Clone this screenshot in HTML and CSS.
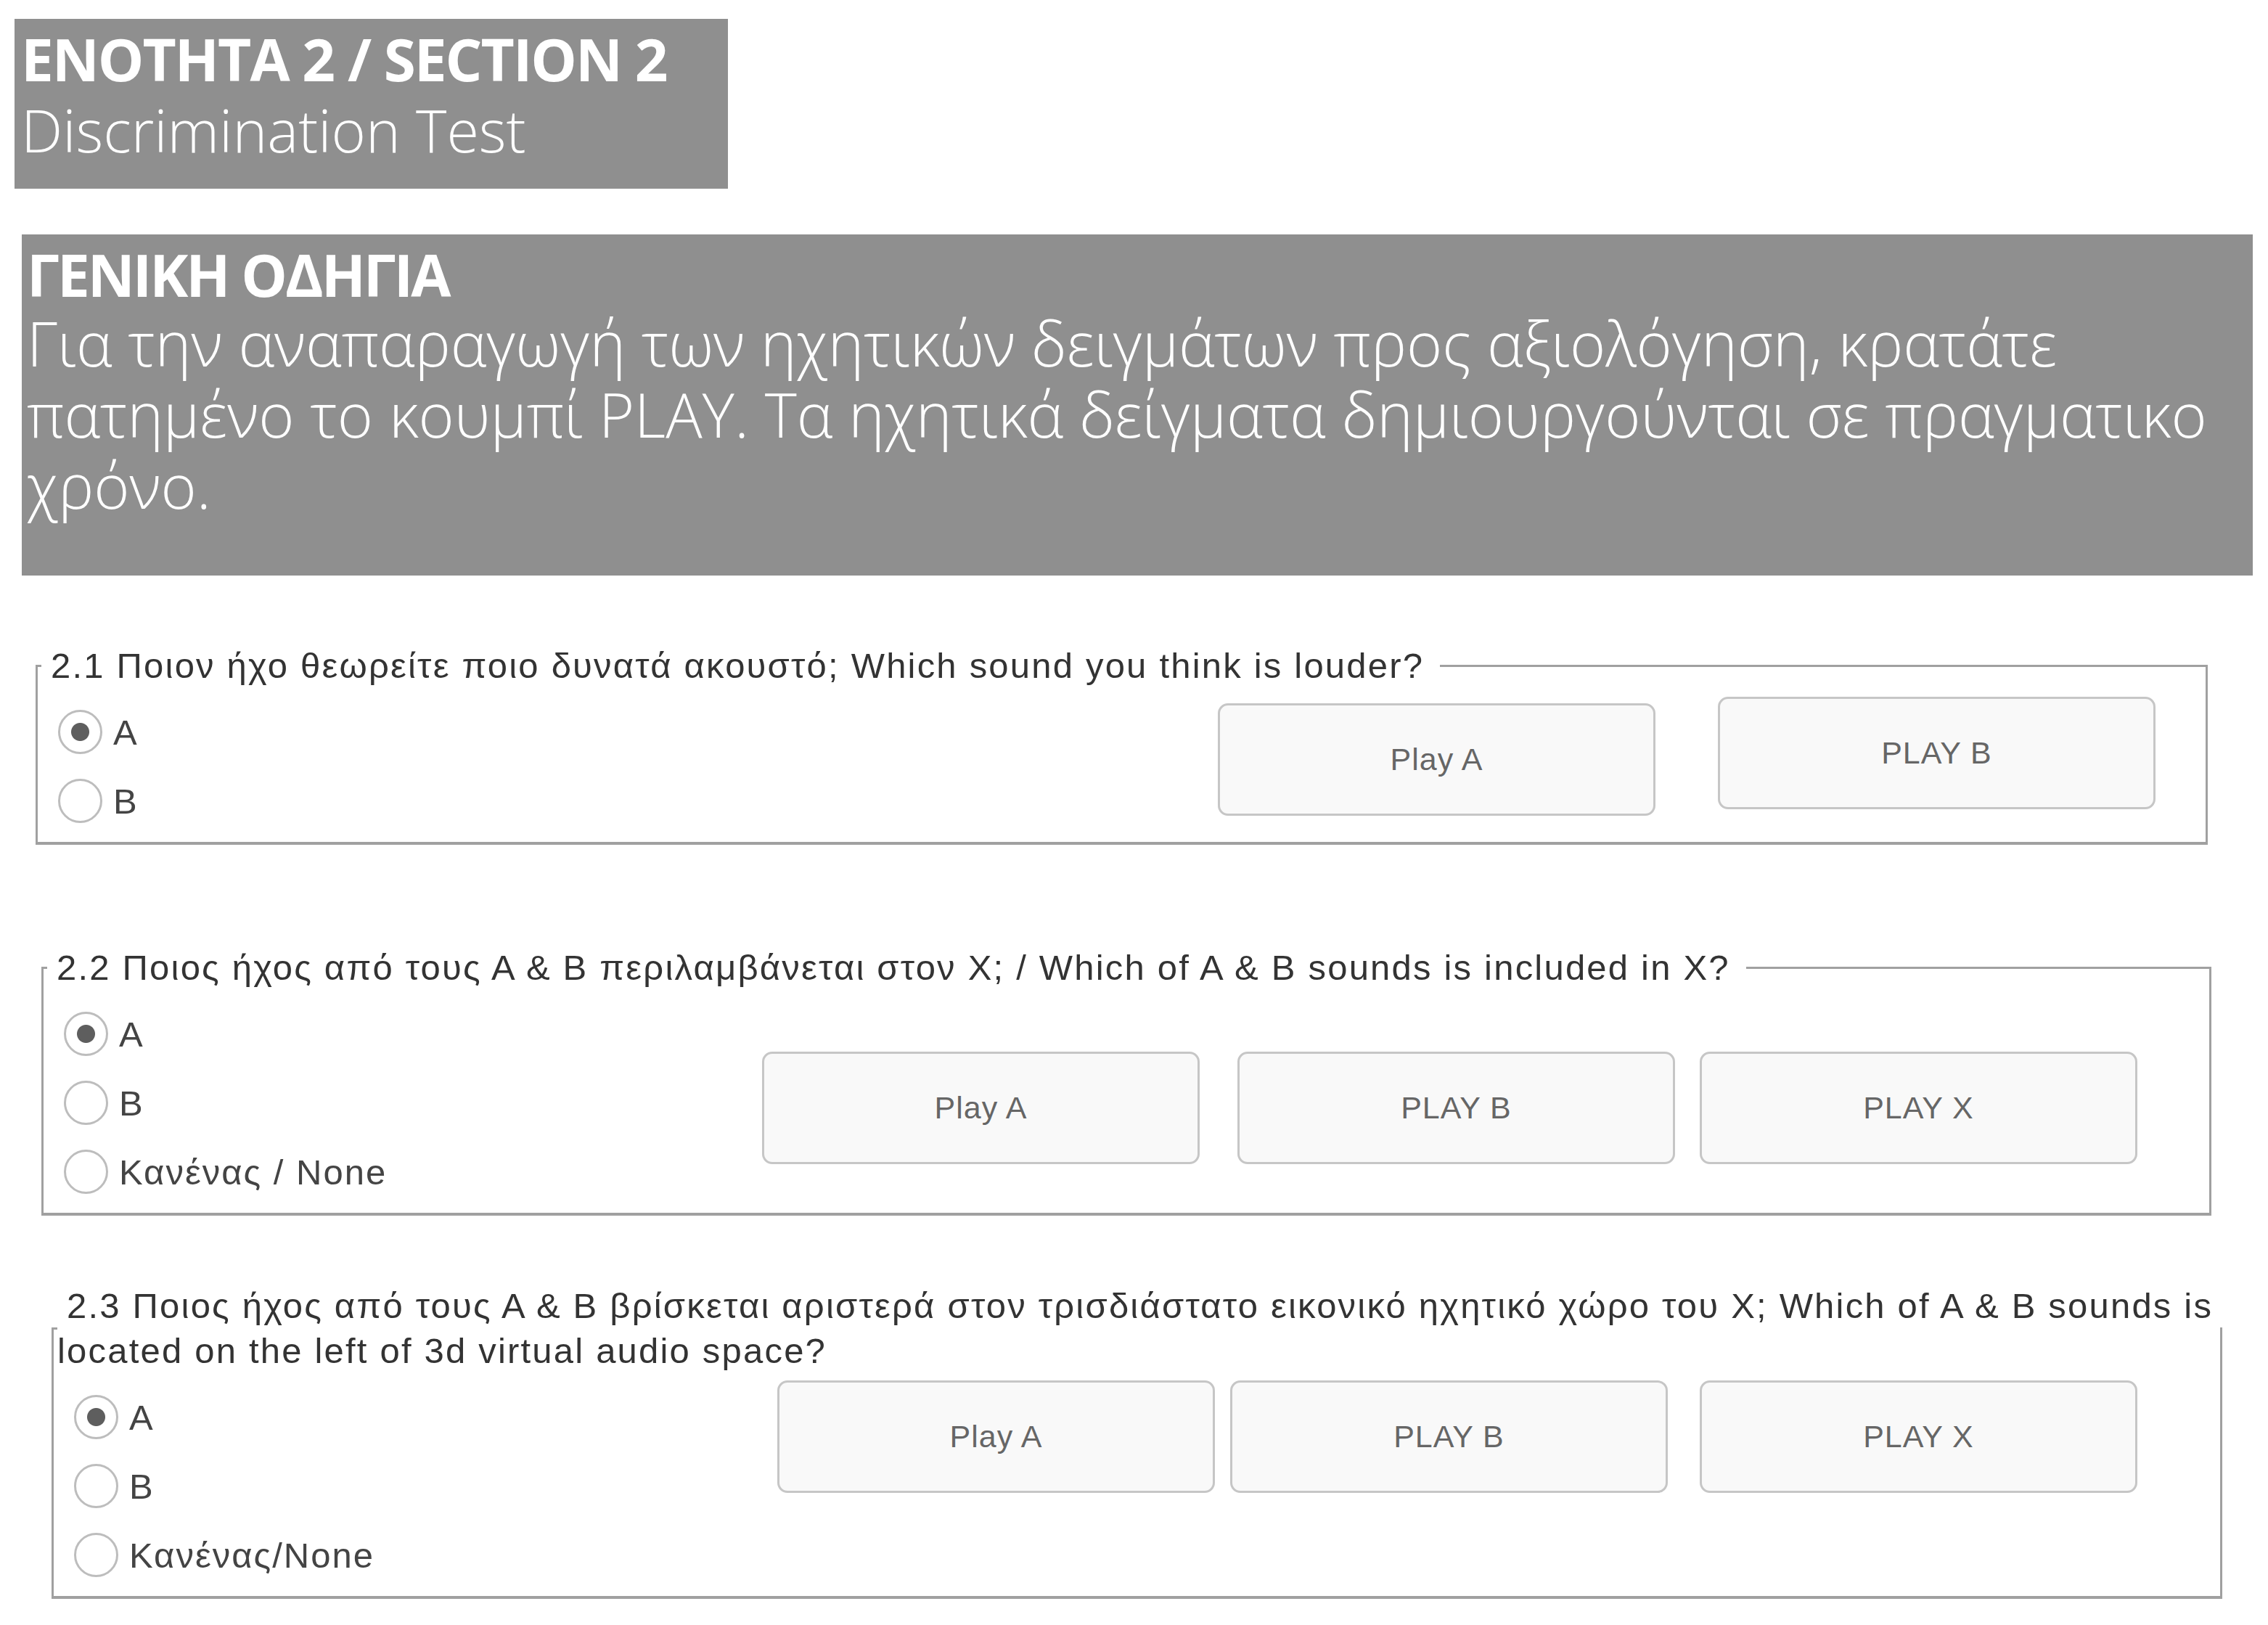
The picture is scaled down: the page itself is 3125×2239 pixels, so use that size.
FILE: index.html
```html
<!DOCTYPE html>
<html lang="el">
<head>
    <meta charset="UTF-8">
    <meta name="viewport" content="width=device-width, initial-scale=1.0">
    <title>Ενότητα 2 - Discrimination Test</title>
    <link rel="stylesheet" href="styles.css">
</head>
<body>

    <!-- Section header -->
    <div class="section-head">
        <h1 class="section-title">ΕΝΟΤΗΤΑ 2 / SECTION 2</h1>
        <p class="section-sub">Discrimination Test</p>
    </div>

    <!-- General instruction -->
    <div class="notice">
        <h2 class="notice-title">ΓΕΝΙΚΗ ΟΔΗΓΙΑ</h2>
        <p class="notice-text">Για την αναπαραγωγή των ηχητικών δειγμάτων προς αξιολόγηση, κρατάτε<br>πατημένο το κουμπί PLAY. Τα ηχητικά δείγματα δημιουργούνται σε πραγματικο<br>χρόνο.</p>
    </div>

    <!-- 2.1 -->
    <fieldset class="question q1">
        <legend>2.1 Ποιον ήχο θεωρείτε ποιο δυνατά ακουστό; Which sound you think is louder?</legend>
        <div class="question-body">
            <div class="choices">
                <label class="choice"><input type="radio" name="q21" value="A" checked><span>A</span></label>
                <label class="choice"><input type="radio" name="q21" value="B"><span>B</span></label>
            </div>
            <div class="players">
                <button class="play-btn play-low">Play A</button>
                <button class="play-btn">PLAY B</button>
            </div>
        </div>
    </fieldset>

    <!-- 2.2 -->
    <fieldset class="question q2">
        <legend>2.2 Ποιος ήχος από τους Α &amp; Β περιλαμβάνεται στον Χ; / Which of A &amp; B sounds is included in X?</legend>
        <div class="question-body">
            <div class="choices">
                <label class="choice"><input type="radio" name="q22" value="A" checked><span>A</span></label>
                <label class="choice"><input type="radio" name="q22" value="B"><span>B</span></label>
                <label class="choice"><input type="radio" name="q22" value="none"><span>Κανένας / None</span></label>
            </div>
            <div class="players">
                <button class="play-btn">Play A</button>
                <button class="play-btn">PLAY B</button>
                <button class="play-btn">PLAY X</button>
            </div>
        </div>
    </fieldset>

    <!-- 2.3 -->
    <fieldset class="question q3">
        <legend>2.3 Ποιος ήχος από τους Α &amp; Β βρίσκεται αριστερά στον τρισδιάστατο εικονικό ηχητικό χώρο του Χ; Which of A &amp; B sounds is<br>located on the left of 3d virtual audio space?</legend>
        <div class="question-body">
            <div class="choices">
                <label class="choice"><input type="radio" name="q23" value="A" checked><span>A</span></label>
                <label class="choice"><input type="radio" name="q23" value="B"><span>B</span></label>
                <label class="choice"><input type="radio" name="q23" value="none"><span>Κανένας/None</span></label>
            </div>
            <div class="players">
                <button class="play-btn">Play A</button>
                <button class="play-btn">PLAY B</button>
                <button class="play-btn">PLAY X</button>
            </div>
        </div>
    </fieldset>

</body>
</html>
```

FILE: styles.css
```css
/* General Styles */
body {
    margin: 0;
    padding: 0 0 20px;
    background: #fff;
    font-family: 'Liberation Sans', Arial, sans-serif;
}

/* Section header boxes */
.section-head {
    inline-size: 983px;
    margin: 26px 0 0 20px;
    padding: 6px 0 32px 9px;
    box-sizing: border-box;
    background-color: #8f8f8f;
    color: #fff;
    font-family: 'Open Sans', sans-serif;
}
.section-title,
.notice-title {
    margin: 0;
    font-size: 80px;
    line-height: 98px;
    font-weight: 700;
    letter-spacing: -2px;
}
.notice-title {
    letter-spacing: -3px;
}
.section-sub {
    margin: 0;
    font-size: 81px;
    line-height: 98px;
    font-weight: 300;
}

.notice {
    inline-size: 3074px;
    margin: 63px 0 0 30px;
    padding: 6px 0 75px 7px;
    box-sizing: border-box;
    background-color: #8f8f8f;
    color: #fff;
    font-family: 'Open Sans', sans-serif;
}
.notice-text {
    margin: -3px 0 0;
    font-size: 84px;
    line-height: 98px;
    font-weight: 300;
}

/* Questions */
.question {
    box-sizing: border-box;
    margin: 93px 0 0 49px;
    padding: 0 0 26px 5px;
    inline-size: 2993px;
    border: 3px solid #a0a0a0;
    border-block-end-width: 4px;
}
.question legend {
    padding: 0 22px 0 0;
    text-indent: 13px;
    font-size: 49px;
    line-height: 62px;
    letter-spacing: 2.2px;
    color: #333;
}
.q2 {
    margin: 138px 0 0 57px;
    inline-size: 2990px;
}
.q3 {
    margin: 93px 0 0 71px;
    inline-size: 2991px;
}
.q3 legend {
    inline-size: 100%;
    box-sizing: border-box;
    padding: 0;
}

.question-body {
    display: flex;
    align-items: flex-start;
}
.choices {
    flex: none;
    inline-size: 500px;
    margin: 30px 0 0 23px;
    display: flex;
    flex-direction: column;
    gap: 34px;
}
.choice {
    display: flex;
    align-items: center;
    gap: 15px;
    font-size: 49px;
    letter-spacing: 2px;
    color: #444;
    cursor: pointer;
}
.choice input {
    appearance: none;
    margin: 0;
    inline-size: 61px;
    block-size: 61px;
    border: 3px solid #bdbdbd;
    border-radius: 50%;
    background: #fff;
}
.choice input:checked {
    background: radial-gradient(circle, #5e5e5e 0 12px, #fff 13px);
}

/* Play buttons */
.players {
    display: flex;
    align-items: flex-start;
}
.play-btn {
    inline-size: 603px;
    block-size: 155px;
    border: 3px solid #c6c6c6;
    border-radius: 14px;
    background-color: #f9f9f9;
    color: #666;
    font-family: 'Liberation Sans', Arial, sans-serif;
    font-size: 43px;
    letter-spacing: 1px;
    cursor: pointer;
}
.play-btn:hover {
    background-color: #f0f0f0;
}

.q1 .players {
    margin: 12px 0 0 1098px;
    gap: 86px;
}
.q1 .play-low {
    margin-block-start: 9px;
}
.q2 .players {
    margin: 85px 0 0 462px;
}
.q2 .play-btn:nth-child(2) {
    margin-inline-start: 52px;
}
.q2 .play-btn:nth-child(3) {
    margin-inline-start: 34px;
}
.q3 .players {
    margin: 10px 0 0 469px;
}
.q3 .play-btn:nth-child(2) {
    margin-inline-start: 21px;
}
.q3 .play-btn:nth-child(3) {
    margin-inline-start: 44px;
}
```
